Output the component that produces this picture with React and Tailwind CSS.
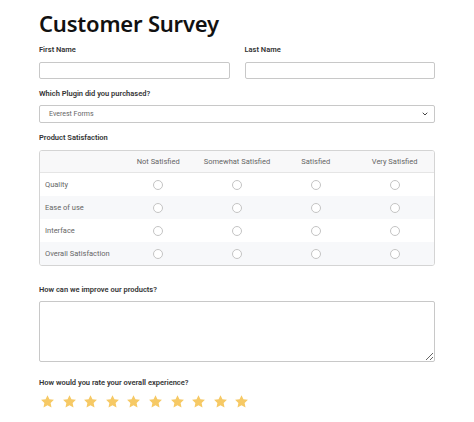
import React, { useState } from 'react';

const columns = ['Not Satisfied', 'Somewhat Satisfied', 'Satisfied', 'Very Satisfied'];
const rows = ['Quality', 'Ease of use', 'Interface', 'Overall Satisfaction'];

function Star({ filled }) {
  return (
    <svg width="15" height="15" viewBox="0 0 24 24" className="shrink-0">
      <path
        d="M12 1.8l3.1 6.6 7.2.9-5.3 5 1.4 7.1L12 17.9l-6.4 3.5 1.4-7.1-5.3-5 7.2-.9z"
        fill={filled ? '#f6c965' : '#e5e7eb'}
      />
    </svg>
  );
}

export default function App() {
  const [answers, setAnswers] = useState({});
  const [rating] = useState(10);

  const label = 'block text-[7.5px] font-semibold text-[#333] leading-none';
  const input = 'block w-full h-[17px] border border-[#c8c8c8] rounded-[2px] bg-white outline-none';

  return (
    <div className="w-[474px] h-[422px] bg-white overflow-hidden" style={{ fontFamily: 'Roboto, "Noto Sans", sans-serif' }}>
      <div className="pl-[39px] pr-[39px] pt-[12px]">
        <h1 className="text-[22px] font-semibold text-[#111] leading-none tracking-[-0.2px]" style={{ fontFamily: '"Noto Sans", sans-serif' }}>
          Customer Survey
        </h1>

        <div className="flex gap-[15px] mt-[12px]">
          <div className="flex-1">
            <span className={label}>First Name</span>
            <input className={`${input} mt-[8.5px]`} />
          </div>
          <div className="flex-1">
            <span className={label}>Last Name</span>
            <input className={`${input} mt-[8.5px]`} />
          </div>
        </div>

        <div className="mt-[11px]">
          <span className={label}>Which Plugin did you purchased?</span>
          <div className="mt-[7.5px] h-[18px] border border-[#c8c8c8] rounded-[2px] flex items-center justify-between pl-[9px] pr-[5px]">
            <span className="text-[7px] text-[#666]">Everest Forms</span>
            <svg width="8" height="8" viewBox="0 0 24 24" fill="none" stroke="#444" strokeWidth="3" strokeLinecap="round" strokeLinejoin="round">
              <path d="M6 9l6 6 6-6" />
            </svg>
          </div>
        </div>

        <div className="mt-[11px]">
          <span className={label}>Product Satisfaction</span>
          <div className="mt-[8.5px] border border-[#d4d4d4] rounded-[3px] overflow-hidden">
            <div className="grid grid-cols-5 h-[22px] bg-[#f8f8f9] border-b border-[#e5e5e5] items-center">
              <span />
              {columns.map((c) => (
                <span key={c} className="text-center text-[7.5px] text-[#666]">{c}</span>
              ))}
            </div>
            {rows.map((r, i) => (
              <div key={r} className={`grid grid-cols-5 h-[23px] items-center ${i % 2 === 1 ? 'bg-[#f7f8fa]' : 'bg-white'}`}>
                <span className="pl-[5px] text-[7.5px] text-[#666] whitespace-nowrap">{r}</span>
                {columns.map((c) => (
                  <button
                    key={c}
                    type="button"
                    onClick={() => setAnswers((prev) => ({ ...prev, [r]: c }))}
                    className="flex justify-center"
                  >
                    <span className="w-[10px] h-[10px] rounded-full border border-[#c4c4c4] bg-white flex items-center justify-center">
                      {answers[r] === c && <span className="w-[4px] h-[4px] rounded-full bg-[#555]" />}
                    </span>
                  </button>
                ))}
              </div>
            ))}
          </div>
        </div>

        <div className="mt-[20px]">
          <span className={label}>How can we improve our products?</span>
          <textarea className="block mt-[7px] w-full h-[61px] border border-[#c8c8c8] rounded-[2px] outline-none resize-y" />
        </div>

        <div className="mt-[17.5px]">
          <span className={label}>How would you rate your overall experience?</span>
          <div className="flex gap-[6.6px] mt-[7.5px] pl-[1px]">
            {Array.from({ length: 10 }).map((_, i) => (
              <Star key={i} filled={i < rating} />
            ))}
          </div>
        </div>
      </div>
    </div>
  );
}
